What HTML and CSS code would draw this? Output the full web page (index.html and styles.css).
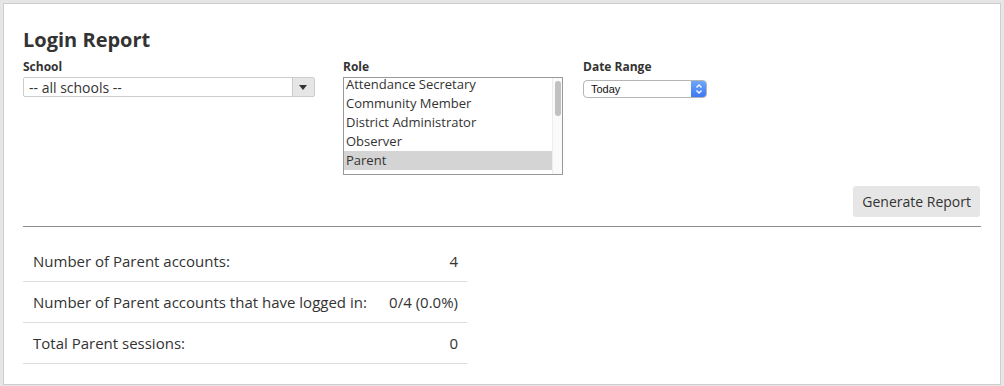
FILE: index.html
```html
<!DOCTYPE html>
<html lang="en">
<head>
  <meta charset="UTF-8">
  <title>Login Report</title>
  <link rel="stylesheet" href="styles.css">
</head>
<body>
  <div class="panel">
    <h1>Login Report</h1>

    <div class="filters">
      <div class="field field-school">
        <label>School</label>
        <div class="combo">
          <span class="combo-text">-- all schools --</span>
          <span class="combo-arrow"></span>
        </div>
      </div>

      <div class="field field-role">
        <label>Role</label>
        <div class="listbox">
          <ul class="options">
            <li>Attendance Secretary</li>
            <li>Community Member</li>
            <li>District Administrator</li>
            <li>Observer</li>
            <li class="selected">Parent</li>
          </ul>
          <div class="scrolltrack"><div class="scrollthumb"></div></div>
        </div>
      </div>

      <div class="field field-date">
        <label>Date Range</label>
        <div class="mac-select">
          <span class="mac-text">Today</span>
          <span class="stepper">
            <svg width="8" height="12" viewBox="0 0 8 12">
              <path d="M1.5 4.5 L4 2 L6.5 4.5 M1.5 7.5 L4 10 L6.5 7.5" fill="none" stroke="#fff" stroke-width="1.3"/>
            </svg>
          </span>
        </div>
      </div>
    </div>

    <div class="actions">
      <button>Generate Report</button>
    </div>

    <hr>

    <table class="results">
      <tr>
        <td>Number of Parent accounts:</td>
        <td class="num">4</td>
      </tr>
      <tr>
        <td>Number of Parent accounts that have logged in:</td>
        <td class="num">0/4 (0.0%)</td>
      </tr>
      <tr>
        <td>Total Parent sessions:</td>
        <td class="num">0</td>
      </tr>
    </table>
  </div>
</body>
</html>
```

FILE: styles.css
```css
body {
  margin: 0;
  background-color: #e6e6e6;
  font-family: "Open Sans", "Noto Sans", sans-serif;
  color: #333;
  padding: 3px 3px 1px 3px;
}
.panel {
  background-color: #fff;
  border: 1px solid #cdcdcd;
  padding: 23px 19px 19px 19px;
  height: 338px;
}
h1 {
  margin: 0;
  font-size: 20px;
  line-height: 26px;
  font-weight: bold;
}
.filters {
  display: flex;
  margin-top: 6px;
}
.field label {
  display: block;
  font-size: 12px;
  font-weight: bold;
  line-height: 16px;
  margin-bottom: 2px;
}
.field-school {
  width: 292px;
  margin-right: 28px;
}
.field-role {
  width: 220px;
  margin-right: 20px;
}
.combo {
  display: flex;
  height: 20px;
  border: 1px solid #ccc;
  border-radius: 2px;
  box-sizing: border-box;
  margin-top: 2px;
}
.combo-text {
  flex: 1;
  font-size: 14px;
  line-height: 19px;
  padding-left: 5px;
}
.combo-arrow {
  width: 21px;
  background-color: #e6e6e6;
  border-left: 1px solid #ccc;
  position: relative;
}
.combo-arrow::after {
  content: "";
  position: absolute;
  left: 6px;
  top: 7px;
  border-left: 4px solid transparent;
  border-right: 4px solid transparent;
  border-top: 5px solid #333;
}
.listbox {
  display: flex;
  height: 98px;
  margin-top: 1px;
  border: 1px solid #999;
  box-sizing: border-box;
  overflow: hidden;
}
.options {
  flex: 1;
  list-style: none;
  margin: -3px 0 0 0;
  padding: 0;
  font-size: 13px;
}
.options li {
  height: 19px;
  line-height: 19px;
  padding-left: 2px;
}
.options li.selected {
  background-color: #d4d4d4;
}
.scrolltrack {
  width: 10px;
  border-left: 1px solid #ededed;
  background-color: #fafafa;
  padding: 3px 2px;
  box-sizing: border-box;
}
.scrollthumb {
  width: 6px;
  height: 35px;
  border-radius: 3px;
  background-color: #c1c1c1;
}
.mac-select {
  display: flex;
  width: 124px;
  height: 18px;
  margin-top: 5px;
  border: 1px solid #b5b5b5;
  border-radius: 4px;
  box-sizing: border-box;
  overflow: hidden;
  font-family: "Liberation Sans", Arial, sans-serif;
  color: #111;
}
.mac-text {
  flex: 1;
  font-size: 11px;
  line-height: 16px;
  padding-left: 7px;
}
.stepper {
  width: 15px;
  background: linear-gradient(#6fa6fb, #3c78f1);
  display: flex;
  align-items: center;
  justify-content: center;
}
.actions {
  display: flex;
  justify-content: flex-end;
  margin-top: 11px;
}
button {
  font-family: "Open Sans", "Noto Sans", sans-serif;
  font-size: 14px;
  color: #333;
  background-color: #e6e6e6;
  border: none;
  border-radius: 3px;
  height: 31px;
  padding: 0 9px;
  margin-right: 1px;
}
hr {
  border: none;
  border-top: 1px solid #8c8c8c;
  margin: 9px 0 14px 0;
}
.results {
  border-collapse: collapse;
  width: 444px;
  font-size: 15px;
}
.results td {
  height: 40px;
  padding: 0 10px;
  border-bottom: 1px solid #ddd;
}
.results td.num {
  text-align: right;
  padding-right: 9px;
}
```
